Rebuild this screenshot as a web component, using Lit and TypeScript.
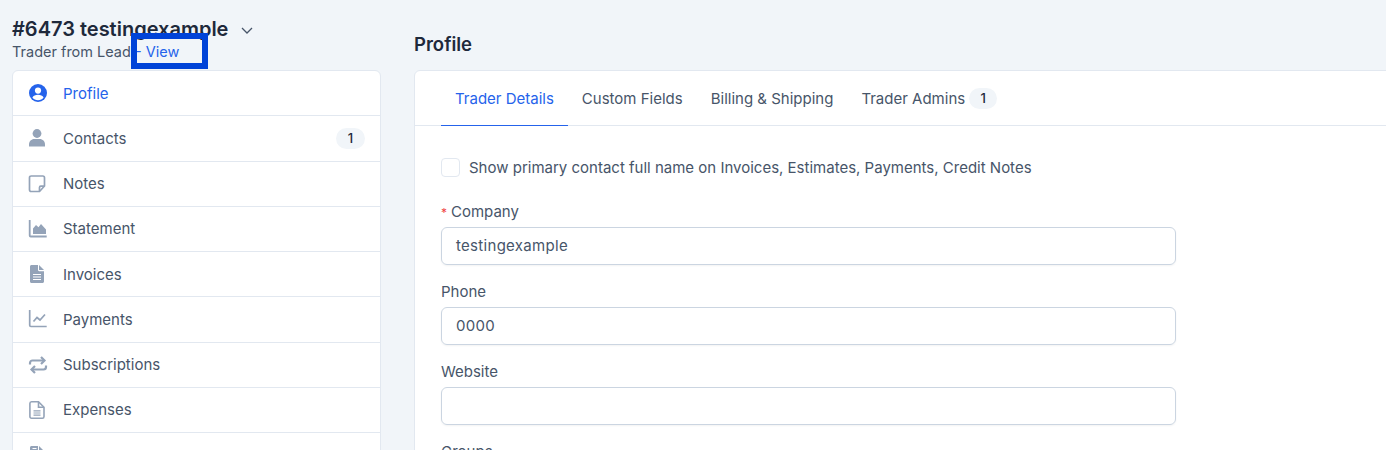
import { LitElement, html, css, svg } from 'lit';
import { customElement } from 'lit/decorators.js';

const icons: Record<string, unknown> = {
  profile: svg`<svg viewBox="0 0 20 20" width="20" height="20"><circle cx="10" cy="10" r="9" fill="#2563eb"/><circle cx="10" cy="7.6" r="3.1" fill="#fff"/><path d="M4.4 14.6c1-2 3-2.9 5.6-2.9s4.6.9 5.6 2.9c-1.3 1.7-3.3 2.7-5.6 2.7s-4.3-1-5.6-2.7z" fill="#fff"/></svg>`,
  contacts: svg`<svg viewBox="0 0 20 20" width="20" height="20"><circle cx="9" cy="5.5" r="4.4" fill="#94a3b8"/><path d="M1 18.5v-2.3C1 13.3 3.4 11 6.2 11h5.6c2.8 0 5.2 2.3 5.2 5.2v2.3z" fill="#94a3b8"/></svg>`,
  notes: svg`<svg viewBox="0 0 20 20" width="20" height="20" fill="none" stroke="#94a3b8" stroke-width="1.7"><path d="M3.2 2h11.6c1 0 1.7.7 1.7 1.7V12l-5 5.5H3.2c-1 0-1.7-.7-1.7-1.7V3.700c0-1 .7-1.700 1.700-1.700z" stroke-linejoin="round"/><path d="M11.500 17v-3.500c0-.8.5-1.300 1.300-1.300h3.700" stroke-linejoin="round"/></svg>`,
  statement: svg`<svg viewBox="0 0 20 20" width="20" height="20"><path d="M1.700 1v15.500c0 .6.400 1 1 1H18.700" fill="none" stroke="#94a3b8" stroke-width="1.800"/><path d="M5 15V9.500l3-3.500 2.500 2.200L13 5l5 5.500V15z" fill="#94a3b8"/></svg>`,
  invoices: svg`<svg viewBox="0 0 20 20" width="20" height="20"><path d="M2 2.500C2 1.600 2.700 1 3.500 1H10v5c0 .7.600 1.200 1.200 1.200H16v10.300c0 .9-.7 1.500-1.500 1.500h-11C2.700 19 2 18.400 2 17.500z" fill="#94a3b8"/><path d="M11 1l5 5h-5z" fill="#94a3b8"/><path d="M5 10.500h8M5 13h8M5 15.500h8" stroke="#fff" stroke-width="1.200"/></svg>`,
  payments: svg`<svg viewBox="0 0 20 20" width="20" height="20" fill="none" stroke="#94a3b8" stroke-width="1.700"><path d="M1.700 1v15.300c0 .7.500 1.200 1.200 1.200h15.800"/><path d="M5.500 12.500l3.500-4 3 2.500 5-5.500"/></svg>`,
  subscriptions: svg`<svg viewBox="0 0 20 20" width="20" height="20" fill="none" stroke="#94a3b8" stroke-width="2.200"><path d="M2 9.500V8c0-1.500 1-2.500 2.500-2.500H16"/><path d="M13 2l3.500 3.500L13 9"/><path d="M18 10.500V12c0 1.500-1 2.500-2.500 2.500H4"/><path d="M7 11l-3.500 3.500L7 18"/></svg>`,
  expenses: svg`<svg viewBox="0 0 20 20" width="20" height="20" fill="none" stroke="#94a3b8" stroke-width="1.600"><path d="M3.500 1.800h7l5.500 5.500v9.200c0 .9-.7 1.700-1.600 1.700H3.500c-.9 0-1.600-.8-1.600-1.700V3.500c0-.9.700-1.700 1.600-1.700z"/><path d="M10.500 2v5.300H16"/><path d="M5.500 10.800h7M5.500 13h7M5.500 15.200h7" stroke-width="1.200"/></svg>`,
  contracts: svg`<svg viewBox="0 0 20 20" width="20" height="20"><path d="M2 2.500C2 1.600 2.700 1 3.500 1H10v5c0 .7.600 1.200 1.200 1.200H16v10.300c0 .9-.7 1.500-1.500 1.500h-11C2.700 19 2 18.400 2 17.500z" fill="#94a3b8"/><path d="M11 1l5 5h-5z" fill="#94a3b8"/><path d="M4.500 3.500h4M4.500 6h4" stroke="#fff" stroke-width="1.200"/></svg>`,
};

const navItems = [
  { id: 'profile', label: 'Profile', active: true },
  { id: 'contacts', label: 'Contacts', count: 1 },
  { id: 'notes', label: 'Notes' },
  { id: 'statement', label: 'Statement' },
  { id: 'invoices', label: 'Invoices' },
  { id: 'payments', label: 'Payments' },
  { id: 'subscriptions', label: 'Subscriptions' },
  { id: 'expenses', label: 'Expenses' },
  { id: 'contracts', label: 'Contracts' },
];

const fields = [
  { label: 'Company', value: 'testingexample', required: true },
  { label: 'Phone', value: '0000' },
  { label: 'Website', value: '' },
];

@customElement('app-root')
export class AppRoot extends LitElement {
  static styles = css`
    :host {
      display: block;
      width: 1386px;
      height: 450px;
      overflow: hidden;
      background: #f1f5f9;
      font-family: Inter, "Liberation Sans", sans-serif;
      font-size: 15px;
      color: #475569;
    }
    .page {
      display: grid;
      grid-template-columns: 369px 1000px;
      column-gap: 33px;
      padding: 16px 0 0 12px;
      position: relative;
    }
    .title {
      display: flex;
      align-items: center;
      height: 25px;
      font-size: 20px;
      font-weight: 600;
      color: #1e293b;
      margin-bottom: 1px;
    }
    .title svg {
      margin-left: 12px;
      margin-top: 2px;
    }
    .sub {
      height: 20px;
      line-height: 20px;
      font-size: 14.5px;
      margin-bottom: 8px;
    }
    .sub a {
      color: #2563eb;
    }
    .highlight {
      position: absolute;
      left: 131px;
      top: 33px;
      width: 65px;
      height: 24px;
      border: 6px solid #0043d8;
    }
    .nav {
      background: #fff;
      border: 1px solid #e2e8f0;
      border-radius: 6px;
      box-sizing: border-box;
    }
    .nav-item {
      display: flex;
      align-items: center;
      height: 45.25px;
      box-sizing: border-box;
      padding: 0 15px;
      border-bottom: 1px solid #e2e8f0;
    }
    .nav-item.active {
      color: #2563eb;
    }
    .nav-icon {
      display: flex;
      width: 20px;
      height: 20px;
      margin-right: 15px;
    }
    .count {
      margin-left: auto;
      width: 29px;
      height: 21px;
      line-height: 21px;
      text-align: center;
      font-size: 13px;
      font-weight: 500;
      border-radius: 11px;
      background: #f1f5f9;
      color: #1e293b;
    }
    .heading {
      margin: 0;
      height: 24px;
      line-height: 24px;
      padding-top: 16px;
      margin-bottom: 14px;
      font-size: 18.5px;
      font-weight: 600;
      color: #1e293b;
    }
    .panel {
      margin-left: 0;
      background: #fff;
      border: 1px solid #e2e8f0;
      border-radius: 6px 0 0 0;
      height: 400px;
    }
    .tabs {
      display: flex;
      align-items: stretch;
      height: 54px;
      padding-left: 26px;
      border-bottom: 1px solid #e2e8f0;
      box-sizing: content-box;
    }
    .tab {
      display: flex;
      align-items: center;
      padding: 0 14px;
      margin-bottom: -1px;
      border-bottom: 1px solid transparent;
    }
    .tab.active {
      color: #2563eb;
      border-bottom-color: #2563eb;
    }
    .tab .count {
      margin-left: 4px;
      width: 28px;
    }
    .form {
      padding: 31px 26px 0;
    }
    .check {
      display: flex;
      align-items: center;
      height: 20px;
      margin-bottom: 25px;
    }
    .box {
      width: 19px;
      height: 19px;
      box-sizing: border-box;
      border: 1px solid #e2e8f0;
      border-radius: 4px;
      margin-right: 9px;
    }
    .field {
      width: 735px;
      margin-bottom: 17px;
    }
    .field label {
      display: block;
      height: 20px;
      line-height: 20px;
      margin-bottom: 5px;
    }
    .req {
      color: #ef4444;
      font-size: 12px;
      margin-right: 4px;
    }
    .input {
      height: 38px;
      line-height: 36px;
      box-sizing: border-box;
      padding: 0 14px;
      border: 1px solid #cbd5e1;
      border-radius: 6px;
      letter-spacing: 0.3px;
      box-shadow: 0 1px 2px rgba(0, 0, 0, 0.05);
    }
  `;

  render() {
    return html`
      <div class="page">
        <aside>
          <div class="title">
            #6473 testingexample
            <svg viewBox="0 0 14 14" width="14" height="14" fill="none" stroke="#475569" stroke-width="1.300"><path d="M2 5l5 5 5-5"/></svg>
          </div>
          <div class="sub">Trader from Lead <a>- View</a></div>
          <nav class="nav">
            ${navItems.map(
              (item) => html`
                <div class="nav-item ${item.active ? 'active' : ''}">
                  <span class="nav-icon">${icons[item.id]}</span>
                  ${item.label}
                  ${item.count ? html`<span class="count">${item.count}</span>` : ''}
                </div>
              `
            )}
          </nav>
        </aside>
        <main>
          <h2 class="heading">Profile</h2>
          <section class="panel">
            <div class="tabs">
              <div class="tab active">Trader Details</div>
              <div class="tab">Custom Fields</div>
              <div class="tab">Billing &amp; Shipping</div>
              <div class="tab">Trader Admins <span class="count">1</span></div>
            </div>
            <div class="form">
              <div class="check">
                <span class="box"></span>
                Show primary contact full name on Invoices, Estimates, Payments, Credit Notes
              </div>
              ${fields.map(
                (field) => html`
                  <div class="field">
                    <label>${field.required ? html`<span class="req">*</span>` : ''}${field.label}</label>
                    <div class="input">${field.value}</div>
                  </div>
                `
              )}
              <div class="field"><label>Groups</label></div>
            </div>
          </section>
        </main>
        <div class="highlight"></div>
      </div>
    `;
  }
}
